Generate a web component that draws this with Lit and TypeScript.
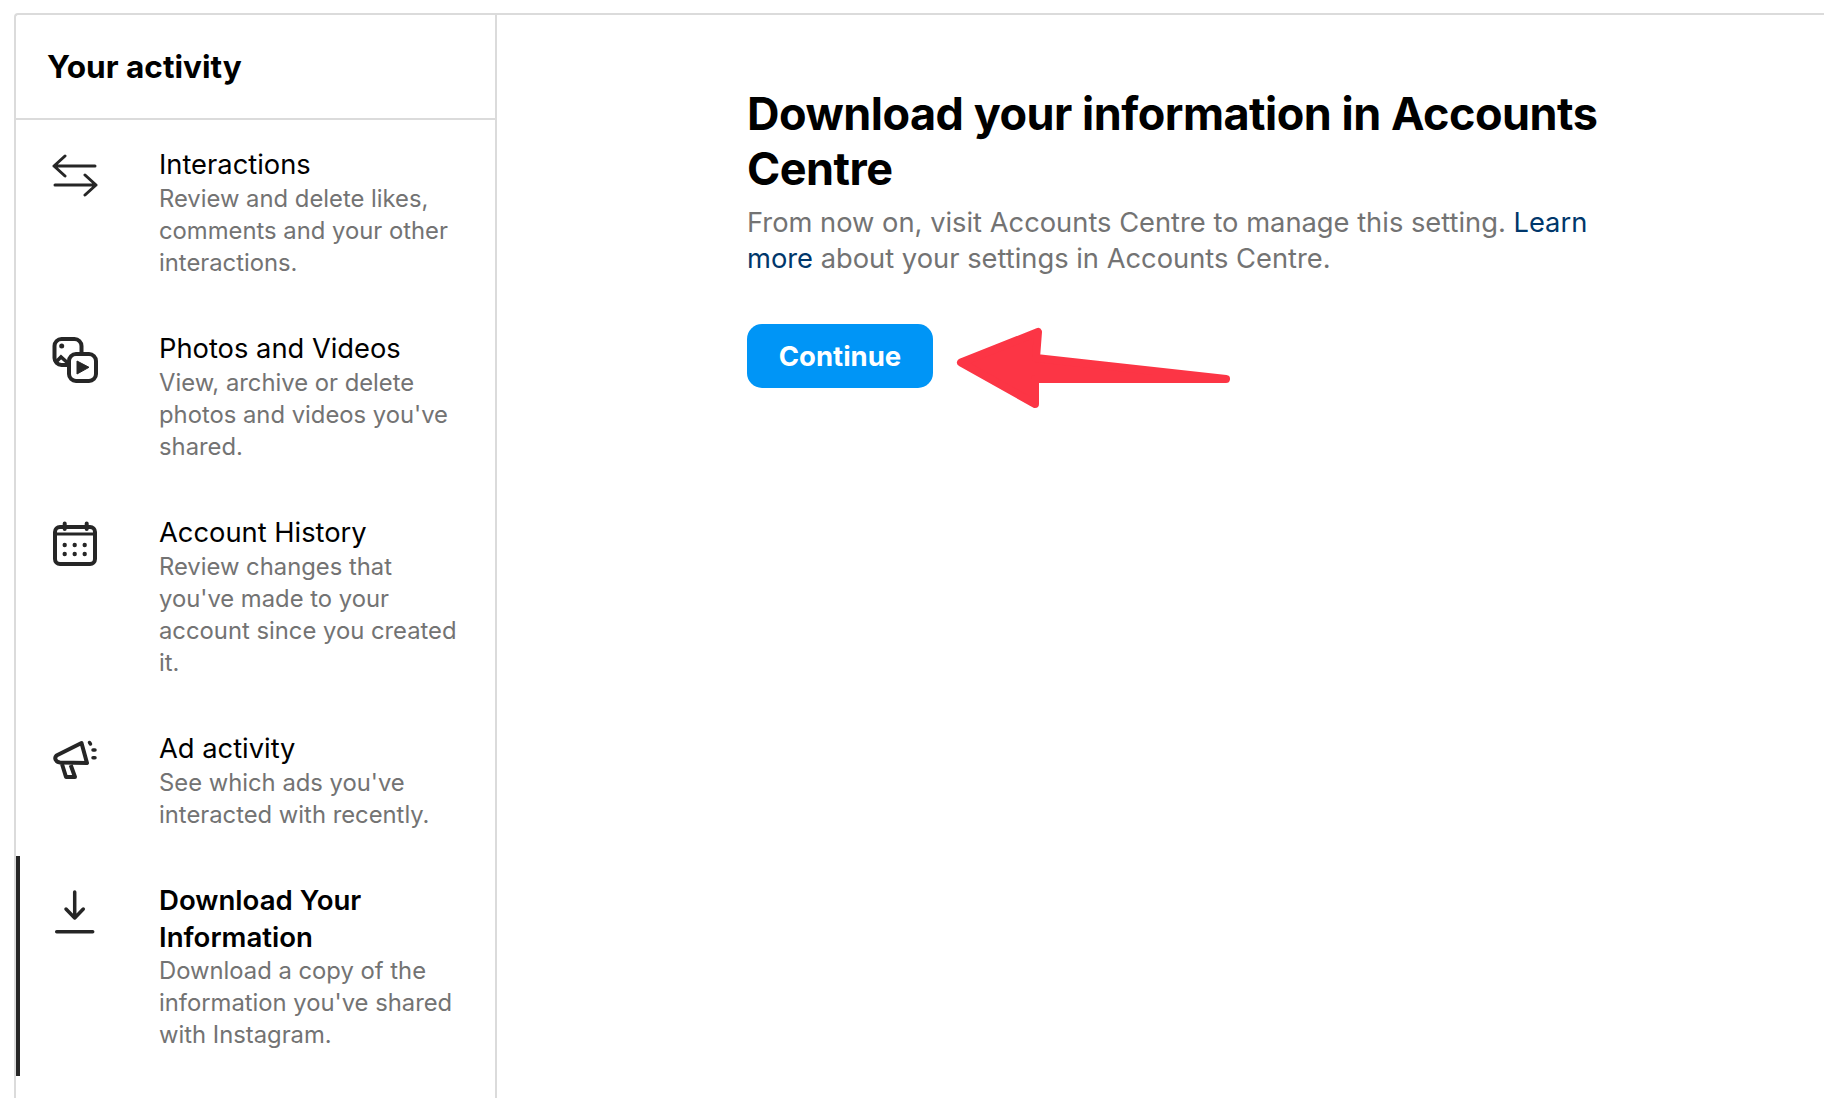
import { LitElement, html, css, svg } from 'lit';
import { customElement } from 'lit/decorators.js';

const icons = {
  swap: svg`<path d="M2 13H43M13 3 2 13 13 23M3 32H44M33 22 44 32 33 42" fill="none" stroke="#262626" stroke-width="3" stroke-linecap="round" stroke-linejoin="round"/>`,
  media: svg`
    <rect x="2.500" y="2" width="27" height="26" rx="7" fill="none" stroke="#262626" stroke-width="4"/>
    <path d="M3 26 9 20 17 27" fill="none" stroke="#262626" stroke-width="3.5"/>
    <circle cx="9.7" cy="9" r="2.5" fill="#262626"/>
    <rect x="17" y="17" width="27" height="27" rx="7" fill="#fff" stroke="#262626" stroke-width="4"/>
    <path d="M25 24 37 30.3 25 37Z" fill="#262626" stroke="#262626" stroke-width="1" stroke-linejoin="round"/>`,
  calendar: svg`
    <rect x="3" y="6" width="40" height="37" rx="5" fill="none" stroke="#262626" stroke-width="4"/>
    <path d="M3 13H43" stroke="#262626" stroke-width="3"/>
    <path d="M12.7 2.500V8M34.700 2.500V8" stroke="#262626" stroke-width="4" stroke-linecap="round"/>
    <g fill="#262626">
      <circle cx="12.700" cy="24" r="2.200"/><circle cx="22.700" cy="24" r="2.200"/><circle cx="32.700" cy="24" r="2.200"/>
      <circle cx="12.700" cy="33" r="2.200"/><circle cx="22.700" cy="33" r="2.200"/><circle cx="32.700" cy="33" r="2.200"/>
    </g>`,
  megaphone: svg`
    <path d="M4.500 18.500 29.500 6 35 26 8 25.500C3.500 25 2 21 4.500 18.500Z" fill="none" stroke="#262626" stroke-width="4" stroke-linejoin="round"/>
    <path d="M10 27 14 40H23L18.700 28" fill="none" stroke="#262626" stroke-width="4" stroke-linejoin="round"/>
    <path d="M37.500 5.500 38.500 7M41 13H43M41 20.700H43" stroke="#262626" stroke-width="3.500" stroke-linecap="round"/>`,
  download: svg`<path d="M22.700 3V29M14 20 22.700 29 31.300 20M4.700 42.700H40.700" fill="none" stroke="#262626" stroke-width="3.500" stroke-linecap="round" stroke-linejoin="round"/>`,
};

const items = [
  { icon: icons.swap, title: 'Interactions', desc: 'Review and delete likes, comments and your other interactions.' },
  { icon: icons.media, title: 'Photos and Videos', desc: "View, archive or delete photos and videos you've shared." },
  { icon: icons.calendar, title: 'Account History', desc: "Review changes that you've made to your account since you created it." },
  { icon: icons.megaphone, title: 'Ad activity', desc: "See which ads you've interacted with recently." },
  { icon: icons.download, title: 'Download Your Information', desc: "Download a copy of the information you've shared with Instagram.", active: true },
];

@customElement('app-root')
export class AppRoot extends LitElement {
  static styles = css`
    :host {
      display: block;
      height: 1098px;
      overflow: hidden;
      padding: 13px 0 0 14px;
      box-sizing: border-box;
      background: #fff;
      font-family: Inter, "Liberation Sans", sans-serif;
      color: #000;
    }

    .card {
      display: flex;
      height: 100%;
      border-top: 2px solid #dbdbdb;
      border-left: 2px solid #dbdbdb;
      border-top-left-radius: 4px;
    }

    .sidebar {
      width: 479px;
      flex: none;
      border-right: 2px solid #dbdbdb;
    }

    .sidebar h2 {
      margin: 0;
      height: 103px;
      padding-left: 31px;
      display: flex;
      align-items: center;
      font-size: 31.600px;
      font-weight: 700;
      border-bottom: 2px solid #dbdbdb;
    }

    .item {
      display: flex;
      padding: 26px 30px 25px 36px;
    }

    .item.active {
      padding-left: 32px;
      border-left: 4px solid #262626;
    }

    .item svg {
      flex: none;
      width: 46px;
      height: 46px;
      margin: 7px 61px 0 0;
    }

    .title {
      font-size: 27.300px;
      line-height: 37px;
    }

    .active .title {
      font-size: 27.600px;
      font-weight: 600;
      line-height: 36.500px;
    }

    .desc {
      font-size: 23.800px;
      line-height: 32px;
      color: #737373;
    }

    .main {
      flex: 1;
      padding: 72px 0 0 250px;
    }

    h1 {
      margin: 0 0 9px;
      width: 880px;
      font-size: 45px;
      line-height: 54.600px;
      font-weight: 700;
      letter-spacing: -0.5px;
    }

    p {
      margin: 0;
      width: 880px;
      font-size: 27.300px;
      line-height: 36px;
      color: #737373;
    }

    a {
      color: #00376b;
    }

    .actions {
      position: relative;
      margin-top: 47px;
    }

    button {
      display: block;
      width: 186px;
      height: 64px;
      border: 0;
      border-radius: 15px;
      background: #0095f6;
      color: #fff;
      font: 700 27.500px Inter, "Liberation Sans", sans-serif;
    }

    .arrow {
      position: absolute;
      left: 200px;
      top: -1px;
      width: 300px;
      height: 100px;
    }
  `;

  render() {
    return html`
      <div class="card">
        <nav class="sidebar">
          <h2>Your activity</h2>
          <div>
            ${items.map(
              (it) => html`
                <div class="item ${it.active ? 'active' : ''}">
                  <svg viewBox="0 0 46 46">${it.icon}</svg>
                  <div>
                    <div class="title">${it.title}</div>
                    <div class="desc">${it.desc}</div>
                  </div>
                </div>
              `,
            )}
          </div>
        </nav>
        <main class="main">
          <h1>Download your information in Accounts Centre</h1>
          <p>From now on, visit Accounts Centre to manage this setting. <a>Learn more</a> about your settings in Accounts Centre.</p>
          <div class="actions">
            <button>Continue</button>
            <svg class="arrow" viewBox="0 0 300 100">
              <path d="M14 39.500 91 9 89 35 279 56H88L88 81Z" fill="#fc3545" stroke="#fc3545" stroke-width="8" stroke-linejoin="round"/>
            </svg>
          </div>
        </main>
      </div>
    `;
  }
}
